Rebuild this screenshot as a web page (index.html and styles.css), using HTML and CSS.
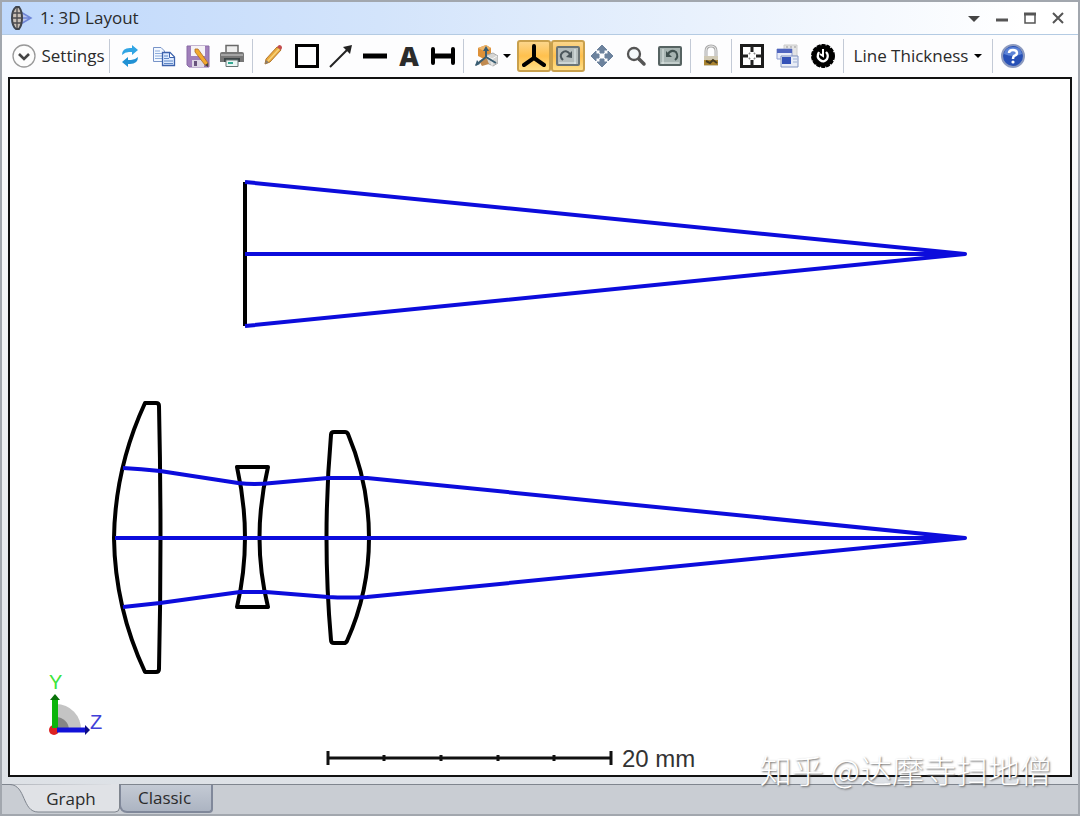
FILE: index.html
```html
<!DOCTYPE html>
<html lang="en">
<head>
    <meta charset="UTF-8">
    <title>1: 3D Layout</title>
    <link rel="stylesheet" href="styles.css">
</head>
<body>
    <div class="window">
        <div class="titlebar">
            <svg class="logo" width="22" height="26" viewBox="0 0 22 26">
                <path d="M8 6L20 13L8 20M8 13H20" fill="#b9c6ee" stroke="#6f86d8" stroke-width="1.5"/>
                <path d="M5 2Q1 5 1 13T5 24H8Q11 20 11 13T8 2Z" fill="#c9bfb5" stroke="#3f444c" stroke-width="2"/>
                <path d="M6 2V24M1 8H10M1 13H11M1 18H10" stroke="#4b4a4c" stroke-width="1.3"/>
            </svg>
            <h1>1: 3D Layout</h1>
            <div class="controls">
                <button aria-label="Menu"><svg width="14" height="14" viewBox="0 0 14 14"><path d="M1 5H13L7 11Z" fill="#444"/></svg></button>
                <button aria-label="Minimize"><svg width="14" height="14" viewBox="0 0 14 14"><path d="M1 9H13" stroke="#555" stroke-width="3"/></svg></button>
                <button aria-label="Maximize"><svg width="14" height="14" viewBox="0 0 14 14"><path d="M2 2V12H12V2M1 3H13" fill="none" stroke="#555" stroke-width="1.5"/><path d="M1 3H13" stroke="#555" stroke-width="3"/></svg></button>
                <button aria-label="Close"><svg width="14" height="14" viewBox="0 0 14 14"><path d="M2 2L12 12M12 2L2 12" stroke="#555" stroke-width="2"/></svg></button>
            </div>
        </div>
        <div class="toolbar">
            <button class="text settings">
                <svg width="24" height="24" viewBox="0 0 24 24"><circle cx="12" cy="12" r="11" fill="#fdfdfd" stroke="#999" stroke-width="1.3"/><path d="M7 10L12 15L17 10" fill="none" stroke="#444" stroke-width="2.6"/></svg>
                Settings
            </button>
            <span class="sep"></span>
            <button aria-label="Refresh"><svg width="24" height="24" viewBox="0 0 24 24">
                <path d="M4 11Q4 4 12 4H14V1L20 6L14 11V8H11Q7 8 4 11Z" fill="#31a5e4"/>
                <path d="M20 13Q20 20 12 20H10V23L4 18L10 13V16H13Q17 16 20 13Z" fill="#2191d4"/>
            </svg></button>
            <button aria-label="Copy"><svg width="24" height="24" viewBox="0 0 24 24">
                <path d="M1.500 3.500H9L12.500 7V17.500H1.500Z" fill="#f3f8ff" stroke="#7894c8"/>
                <path d="M3 7H8M3 9.500H10M3 12H10M3 14.500H10" stroke="#8eaddd"/>
                <path d="M10.500 8.500H18L22.500 13V21.500H10.500Z" fill="#dceaff" stroke="#3c62ac" stroke-width="1.300"/>
                <path d="M17.500 9V13.500H22" fill="#fff" stroke="#3c62ac"/>
                <path d="M12 12H16M12 14.500H17M12 17H21M12 19.500H21" stroke="#6088c6"/>
            </svg></button>
            <button aria-label="Save"><svg width="24" height="24" viewBox="0 0 24 24">
                <path d="M1 2H23V23H3L1 21Z" fill="#a07fba" stroke="#886ba5"/>
                <path d="M5 2H19V12H5Z" fill="#f5f2f6"/>
                <path d="M6 16H18V23H6Z" fill="#ded7e5"/><path d="M8 17H11V22H8Z" fill="#68547c"/>
                <path d="M9 5L12 5L22 19V22L19 21L9 8Z" fill="#f3a92d" stroke="#a96b27" stroke-width=".8"/>
                <path d="M19 21L22 19V23Z" fill="#444"/>
            </svg></button>
            <button aria-label="Print"><svg width="24" height="24" viewBox="0 0 24 24">
                <path d="M6 9V1.500H18V9" fill="#eee" stroke="#696969" stroke-width="1.500"/>
                <path d="M2 8H22Q24 8 24 10V18H0V10Q0 8 2 8Z" fill="#777"/>
                <path d="M1 11H23" stroke="#a4a4a4" stroke-width="2"/>
                <path d="M4 14H20V18H4Z" fill="#3d4547"/>
                <path d="M6 16H18V22.500H6Z" fill="#e9f5f3" stroke="#667372"/>
                <path d="M8 19H13" stroke="#32aa94" stroke-width="2"/>
            </svg></button>
            <span class="sep"></span>
            <button aria-label="Draw"><svg width="24" height="24" viewBox="0 0 24 24">
                <path d="M4 20L5 15L16 3L20 6L9 18Z" fill="#e9a93d" stroke="#b4782e"/>
                <path d="M7 17L18 5" stroke="#f7d27a" stroke-width="1.500"/>
                <path d="M16 3L18 1Q21 1 21 4L20 6Z" fill="#c34c4c"/><path d="M4 20L5 16L8 18.500Z" fill="#897d70"/>
            </svg></button>
            <button aria-label="Rectangle"><svg width="24" height="24" viewBox="0 0 24 24"><path d="M1.500 1.500H22.500V22.500H1.500Z" fill="none" stroke="#000" stroke-width="3"/></svg></button>
            <button aria-label="Arrow"><svg width="24" height="24" viewBox="0 0 24 24"><path d="M1 23L19 5" stroke="#222" stroke-width="2"/><path d="M23 1L21 10L14 3Z" fill="#222"/></svg></button>
            <button aria-label="Line"><svg width="24" height="24" viewBox="0 0 24 24"><path d="M0 12H24" stroke="#000" stroke-width="5"/></svg></button>
            <button class="letter">A</button>
            <button aria-label="Dimension"><svg width="26" height="24" viewBox="0 0 26 24"><path d="M3 5V19M23 5V19" stroke="#000" stroke-width="4" stroke-linecap="round"/><path d="M3 12H23" stroke="#000" stroke-width="5"/></svg></button>
            <span class="sep"></span>
            <button class="split" aria-label="View">
                <svg width="24" height="24" viewBox="0 0 24 24">
                    <path d="M4 4L12 1L17 4V12L10 15L4 12Z" fill="#dd9139"/><path d="M4 4L10 7L17 4L12 1Z" fill="#edb56b"/>
                    <path d="M13 11L19 9L24 12V19L19 22L13 19Z" fill="#d5d5d3" stroke="#aaa"/><path d="M13 12L18 15V22M18 15L23 12" fill="none" stroke="#f6f6f6"/>
                    <path d="M5 17L12 13L15 20L8 22Z" fill="#c08a50"/>
                    <path d="M12 4V13L2 21M12 13L22 19" fill="none" stroke="#395d72" stroke-width="2"/>
                    <path d="M1 22L3 16L6 20ZM9 7L12 2L15 7Z" fill="#395d72"/>
                </svg>
                <svg width="8" height="6" viewBox="0 0 8 6"><path d="M0 1H8L4 5Z" fill="#000"/></svg>
            </button>
            <button class="on" aria-label="Show axes" aria-pressed="true"><svg width="24" height="24" viewBox="0 0 24 24"><path d="M12 2V14L2 21M12 14L22 21" fill="none" stroke="#000" stroke-width="4" stroke-linecap="round"/></svg></button>
            <button class="on" aria-label="Rotate" aria-pressed="true"><svg width="24" height="24" viewBox="0 0 24 24">
                <rect x="1" y="3" width="22" height="18" rx="1" fill="#b4bcbc" stroke="#6b7476" stroke-width="2"/>
                <path d="M3 19H20M19 5V20" stroke="#e5eeee"/>
                <path d="M7 16Q3 12 6 9Q10 5 14 10" fill="none" stroke="#4b565b" stroke-width="2"/><path d="M16 7V14L10 13Z" fill="#4b565b"/>
            </svg></button>
            <button aria-label="Pan"><svg width="24" height="24" viewBox="0 0 24 24">
                <path d="M12 1L17 6H14V9H10V6H7ZM12 23L17 18H14V15H10V18H7ZM1 12L6 7V10H9V14H6V17ZM23 12L18 7V10H15V14H18V17Z" fill="#6c829d" stroke="#6c829d"/>
            </svg></button>
            <button aria-label="Zoom"><svg width="24" height="24" viewBox="0 0 24 24"><circle cx="10" cy="10" r="6" fill="#f5f9fb" stroke="#555" stroke-width="2.300"/><path d="M15 15L20 20" stroke="#555" stroke-width="3.500" stroke-linecap="round"/></svg></button>
            <button aria-label="Reset view"><svg width="24" height="24" viewBox="0 0 24 24">
                <rect x="1" y="3" width="22" height="18" rx="1" fill="#a7b4b2" stroke="#566362" stroke-width="2"/>
                <path d="M3 19H21M5 5V20" stroke="#e1e9e7"/>
                <path d="M10 10Q13 5 18 8Q21 13 17 16" fill="none" stroke="#40504f" stroke-width="2"/><path d="M8 7V13H14Z" fill="#40504f"/>
            </svg></button>
            <span class="sep"></span>
            <button aria-label="Lock"><svg width="24" height="24" viewBox="0 0 24 24">
                <path d="M7 13V7Q7 2 12 2T17 7V13" fill="none" stroke="#aaa" stroke-width="3"/><path d="M7 13V7Q7 2 12 2T17 7V13" fill="none" stroke="#eee"/>
                <path d="M5 12H19V22H5Z" fill="#d0c9b4"/><path d="M5 16H19V21H5Z" fill="#aa8431"/><path d="M7 17L11 19L14 16L18 19" fill="none" stroke="#463c22" stroke-width="2"/>
            </svg></button>
            <span class="sep"></span>
            <button aria-label="Fit"><svg width="24" height="24" viewBox="0 0 24 24">
                <path d="M1.500 1.500H22.500V22.500H1.500Z" fill="#fff" stroke="#1c1c1c" stroke-width="3"/>
                <path d="M12 2V8M12 16V22M2 12H8M16 12H22" stroke="#222" stroke-width="3"/><path d="M9 9L10 10M15 9L14 10M9 15L10 14M15 15L14 14" stroke="#888" stroke-width="2"/>
            </svg></button>
            <button class="wide" aria-label="Clone window"><svg width="24" height="24" viewBox="0 0 24 24">
                <path d="M8 1H21V12H8Z" fill="#e4e4e4" stroke="#ccc"/><path d="M10 3H20" stroke="#999" stroke-dasharray="2"/>
                <path d="M1 5H16V15H1Z" fill="#e8ecf9" stroke="#8d9cd1"/><path d="M1 5H16V9H1Z" fill="#5065bf"/>
                <path d="M5 12H22V23H5Z" fill="#e8ecf6" stroke="#8294c0"/><path d="M6 13H15V20H6Z" fill="#3452b8"/><path d="M17 15H21M17 18H21" stroke="#9db0d4"/>
            </svg></button>
            <button aria-label="Active"><svg width="24" height="24" viewBox="0 0 24 24"><circle cx="12" cy="12" r="11" fill="#000" stroke="#000" stroke-width="2" stroke-dasharray="4 1"/><path d="M8 8Q5 13 9 16T16 15Q18 11 15 8" fill="none" stroke="#fff" stroke-width="2.300"/><path d="M12 5V12L9 10" fill="none" stroke="#fff" stroke-width="2"/></svg></button>
            <span class="sep"></span>
            <button class="text thickness">Line Thickness
                <svg width="8" height="6" viewBox="0 0 8 6"><path d="M0 1H8L4 5Z" fill="#000"/></svg>
            </button>
            <span class="sep"></span>
            <button aria-label="Help"><svg width="24" height="24" viewBox="0 0 24 24"><circle cx="12" cy="12" r="11" fill="#2750b6" stroke="#8c9abf" stroke-width="2"/><path d="M3 10Q4 3 12 3T21 10Q12 14 3 10Z" fill="#5c83d7"/><path d="M8 9Q8 6 12 6T16 9Q16 11 13 12Q12 13 12 15" fill="none" stroke="#fff" stroke-width="2.500"/><circle cx="12" cy="18" r="1.600" fill="#fff"/></svg></button>
        </div>
        <div class="content">
            <svg class="plot" viewBox="10 79 1060 696">
                <!-- lens surfaces -->
                <g class="lens">
                    <path d="M245 182V326"/>
                    <path d="M145 403H156Q159 403 159 406Q162 538 159 669Q159 672 156 672H145Q115 608 114 538Q115 468 145 403Z"/>
                    <path d="M237 467H268Q251 538 268 607H237Q253 538 237 467Z"/>
                    <path d="M334 432H345Q347 432 348 434Q369 484 369 538Q369 592 347 641Q346 643 344 643H334Q331 643 331 640Q322 538 331 435Q331 432 334 432Z"/>
                </g>
                <!-- rays -->
                <g class="ray">
                    <path d="M245 182L965 254L245 326M245 254H965"/>
                    <path d="M123 468Q141 469 160 471L238 483Q254 485 272 483L328 478H367L965 538L367 597Q347 598 328 597L266 592H240L160 603L123 607"/>
                    <path d="M115 538H965"/>
                </g>
                <!-- scale bar -->
                <path class="scale" d="M328 758H611"/>
                <path class="scale" d="M328 751V765M611 751V765M384 755V761M441 755V761M498 755V761M554 755V761"/>
                <text class="unit" x="622" y="767">20 mm</text>
                <!-- axis triad -->
                <path d="M56 704A25 25 0 0 1 81 730H56Z" fill="#c4c4c4"/>
                <path d="M56 717A13 13 0 0 1 69 730H56Z" fill="#858585"/>
                <circle cx="54" cy="730" r="5" fill="#d22"/>
                <path d="M55 728V698" stroke="#0bb50b" stroke-width="6"/>
                <path d="M50 700L55 694L60 700Z" fill="#087208"/>
                <path d="M57 730H86" stroke="#1212d8" stroke-width="5"/>
                <path d="M85 725L90 730L85 735Z" fill="#0c0c86"/>
                <text class="axis y" x="49" y="689">Y</text>
                <text class="axis z" x="90" y="729">Z</text>
            </svg>
        </div>
        <div class="tabs">
            <button class="tab graph">
                <svg viewBox="0 0 118 29" width="118" height="29"><path d="M0 .5H8C24 1 20 28 36 28H113Q117 28 117.500 24V0" fill="#e0e2e6" stroke="#7f858e"/></svg>
                <span>Graph</span>
            </button>
            <button class="tab classic">Classic</button>
        </div>
        <div class="watermark">知乎 @达摩寺扫地僧</div>
    </div>
</body>
</html>
```
FILE: styles.css
```css
* {
    margin: 0;
    padding: 0;
    box-sizing: border-box;
}
body {
    font-family: "Open Sans", "Noto Sans", sans-serif;
    font-size: 17px;
    color: #2b2b2b;
}
button {
    border: none;
    background: none;
    font: inherit;
    color: inherit;
    cursor: pointer;
}
.window {
    position: relative;
    display: flex;
    flex-direction: column;
    height: 100vh;
    border: 2px solid #a2a7ae;
    background: linear-gradient(#fff, #dce0e5);
}
.titlebar {
    display: flex;
    align-items: center;
    height: 33px;
    padding: 0 6px 0 9px;
    background: linear-gradient(to right, #bfd8fb, #d3e4fb 35%, #fff 95%);
    border-bottom: 1px solid #b4cbe3;
}
.titlebar h1 {
    flex: 1;
    margin-left: 7px;
    font-size: 17px;
    font-weight: normal;
    line-height: 24px;
}
.controls {
    display: flex;
}
.controls button {
    display: flex;
    align-items: center;
    justify-content: center;
    width: 28px;
    height: 24px;
}
.toolbar {
    display: flex;
    align-items: center;
    height: 42px;
    padding-left: 9px;
    background: #fdfdfe;
}
.toolbar button {
    display: flex;
    flex: none;
    align-items: center;
    justify-content: center;
    width: 34px;
    height: 32px;
}
.toolbar .sep {
    width: 1px;
    height: 34px;
    margin: 0 3px;
    background: #c3cad6;
}
.toolbar .text {
    width: auto;
    line-height: 22px;
    white-space: nowrap;
}
.toolbar .settings {
    width: 95px;
    gap: 5px;
}
.toolbar .thickness {
    width: 142px;
    gap: 6px;
}
.toolbar .letter {
    font-size: 27px;
    font-weight: 800;
    line-height: 30px;
}
.toolbar .split {
    width: 50px;
    gap: 5px;
}
.toolbar .wide {
    width: 37px;
}
.toolbar .on {
    border: 2px solid #c9a04c;
    border-radius: 3px;
    background: linear-gradient(#fbd58b, #ffc04d 50%, #ffdf87);
}
.content {
    flex: 1;
    min-height: 0;
    margin: 0 6px 7px;
    border: 2px solid #111;
    background: #fff;
}
.plot {
    display: block;
    width: 100%;
    height: 100%;
}
.lens, .ray {
    fill: none;
    stroke: #000;
    stroke-width: 4;
    stroke-linejoin: round;
}
.ray {
    stroke: #0c0cdc;
}
.scale {
    stroke: #111;
    stroke-width: 3;
}
.unit, .axis {
    font-family: "Liberation Sans", Arial, sans-serif;
    font-size: 24px;
    fill: #333;
}
.axis {
    font-size: 20px;
}
.y {
    fill: #3be43b;
}
.z {
    fill: #4040d8;
}
.tabs {
    display: flex;
    height: 30px;
    border-top: 1px solid #7f858e;
    background: #c9cdd3;
}
.tab {
    height: 28px;
    line-height: 24px;
}
.graph {
    position: relative;
    width: 117px;
    height: 29px;
    margin-top: -1px;
    padding-left: 21px;
}
.graph svg {
    position: absolute;
    left: 0;
    top: 0;
}
.graph span {
    position: relative;
}
.classic {
    width: 94px;
    padding-right: 3px;
    border: 2px solid #80889a;
    border-top: none;
    border-radius: 0 0 4px 8px;
    background: linear-gradient(#c4cad4, #acb4c2);
}
.watermark {
    position: absolute;
    right: 26px;
    bottom: 22px;
    font-family: "Noto Sans CJK SC", sans-serif;
    font-size: 32px;
    font-weight: 300;
    line-height: 45px;
    color: #fff;
    text-shadow: 1px 1px 2px #666;
}
```
